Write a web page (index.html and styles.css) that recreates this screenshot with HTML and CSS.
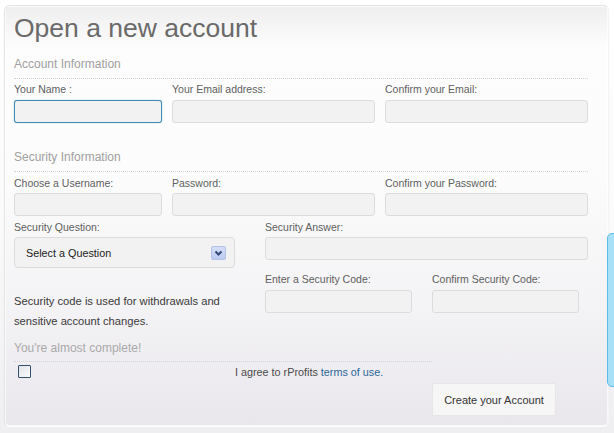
FILE: index.html
```html
<!DOCTYPE html>
<html>
<head>
<meta charset="utf-8">
<link rel="stylesheet" href="styles.css">
</head>
<body>
<div class="card">
  <h1 class="title">Open a new account</h1>

  <div class="section-head">Account Information</div>
  <div class="grid3 row1">
    <div class="field"><label>Your Name :</label><input class="input focus" type="text"></div>
    <div class="field"><label>Your Email address:</label><input class="input" type="text"></div>
    <div class="field"><label>Confirm your Email:</label><input class="input" type="text"></div>
  </div>

  <div class="section-head sec2">Security Information</div>
  <div class="grid3 row2">
    <div class="field"><label>Choose a Username:</label><input class="input" type="text"></div>
    <div class="field"><label>Password:</label><input class="input" type="password"></div>
    <div class="field"><label>Confirm your Password:</label><input class="input" type="password"></div>
  </div>

  <div class="sec3">
    <div class="col-left">
      <label>Security Question:</label>
      <div class="select">
        <span class="select-text">Select a Question</span>
        <span class="sel-btn"><svg width="15" height="14" viewBox="0 0 15 14"><path d="M4.5 5.5 L7.5 8.5 L10.5 5.5" fill="none" stroke="#34497a" stroke-width="2"/></svg></span>
      </div>
      <p class="note">Security code is used for withdrawals and<br>sensitive account changes.</p>
    </div>
    <div class="col-right">
      <label>Security Answer:</label>
      <input class="input answer" type="text">
      <div class="codes">
        <div class="field"><label>Enter a Security Code:</label><input class="input" type="text"></div>
        <div class="field"><label>Confirm Security Code:</label><input class="input" type="text"></div>
      </div>
    </div>
  </div>

  <div class="sec4">
    <div class="finish">
      <div class="almost">You're almost complete!</div>
      <div class="agree">
        <span class="checkbox"></span>
        <span class="agree-text">I agree to rProfits <a class="terms" href="#">terms of use.</a></span>
      </div>
    </div>
    <div class="submit">
      <button class="btn" type="button">Create your Account</button>
    </div>
  </div>
</div>
<div class="side-tab"></div>
</body>
</html>
```

FILE: styles.css
```css
html, body {
  margin: 0;
  padding: 0;
}
body {
  width: 614px;
  height: 433px;
  overflow: hidden;
  position: relative;
  background: linear-gradient(#ffffff 0, #fbfbfb 50%, #efeef1 100%);
  font-family: "Liberation Sans", Arial, sans-serif;
  color: #555;
}
.card {
  box-sizing: border-box;
  margin: 5px 5px 0 4px;
  height: 422px;
  border: 1px solid #e4e4e4;
  border-bottom-color: #fff;
  border-right-color: #f4f4f4;
  border-radius: 6px;
  box-shadow: inset 0 0 0 1px rgba(255,255,255,0.7), 0 0 1px rgba(0,0,0,0.08);
  background: linear-gradient(#eeeeee 0, #fdfdfd 42px, #fcfcfc 40%, #f4f3f5 70%, #e9e7ec 100%);
  padding: 7px 0 0 9px;
}
.title {
  margin: 0;
  font-weight: normal;
  font-size: 26.5px;
  line-height: 30px;
  color: #6a6a6a;
}
.section-head {
  margin-top: 14px;
  width: 574px;
  font-size: 12px;
  line-height: 14px;
  color: #a0a0a0;
  padding-bottom: 7px;
  border-bottom: 1px dotted #d4d4d4;
}
.sec2 {
  margin-top: 27px;
}
label {
  display: block;
  font-size: 10.5px;
  line-height: 13px;
  color: #606060;
}
.grid3 {
  display: grid;
  grid-template-columns: 148px 203px 203px;
  column-gap: 10px;
}
.row1 {
  margin-top: 4px;
}
.row1 .input {
  margin-top: 4px;
}
.row2 {
  margin-top: 4.5px;
}
.row2 .input {
  margin-top: 3.5px;
}
.input {
  display: block;
  box-sizing: border-box;
  width: 100%;
  height: 23px;
  margin: 0;
  padding: 0 4px;
  border: 1px solid #dcdcdc;
  border-radius: 3px;
  background: #f2f2f2;
  outline: none;
}
.input.focus {
  border-color: #3f8cb8;
  box-shadow: 0 0 1px #3f8cb8;
}
.sec3 {
  margin-top: 5px;
  display: grid;
  grid-template-columns: 221px 323px;
  column-gap: 30px;
}
.select {
  margin-top: 3px;
  box-sizing: border-box;
  height: 31px;
  border: 1px solid #dcdcdc;
  border-radius: 4px;
  background: #f2f2f2;
  display: flex;
  align-items: center;
  justify-content: space-between;
  padding: 0 8px 0 11px;
}
.select-text {
  font-size: 10.8px;
  color: #222;
}
.sel-btn {
  display: flex;
  width: 15px;
  height: 14px;
  box-sizing: border-box;
  border: 1px solid #b3c2e6;
  border-radius: 2px;
  background: linear-gradient(#d5def7, #bccbf0);
}
.sel-btn svg {
  display: block;
  margin: -1px;
}
.note {
  margin: 23.4px 0 0 0;
  font-size: 11.2px;
  line-height: 20px;
  color: #3a3a3a;
}
.answer {
  margin-top: 3px;
}
.codes {
  margin-top: 13px;
  display: grid;
  grid-template-columns: 147px 147px;
  column-gap: 20px;
}
.codes .input {
  margin-top: 4px;
}
.sec4 {
  margin-top: 10px;
  display: grid;
  grid-template-columns: 418px 130px;
}
.almost {
  font-size: 12px;
  line-height: 14px;
  color: #aaa;
  padding-bottom: 6px;
  border-bottom: 1px dotted #d4d4d4;
}
.agree {
  margin-top: 3px;
  display: flex;
  align-items: center;
  height: 13px;
}
.checkbox {
  box-sizing: border-box;
  width: 13px;
  height: 13px;
  margin-left: 4px;
  border: 1px solid #34506b;
  border-radius: 1px;
  background: linear-gradient(135deg, #dfe3e8, #fbfbfb);
}
.agree-text {
  margin-left: 204px;
  font-size: 10.8px;
  line-height: 13px;
  color: #4a4a4a;
  padding-top: 2px;
}
.terms {
  color: #2b6699;
  text-decoration: none;
}
.btn {
  margin-top: 42px;
  box-sizing: border-box;
  width: 124px;
  height: 33px;
  padding: 0;
  border: 1px solid #e6e6e6;
  border-radius: 2px;
  background: #f6f6f6;
  font-family: "Liberation Sans", Arial, sans-serif;
  font-size: 11px;
  color: #333;
}
.side-tab {
  position: absolute;
  left: 607px;
  top: 233px;
  width: 14px;
  height: 154px;
  box-sizing: border-box;
  border: 1px solid #5dbde6;
  border-radius: 5px;
  background: #a8e1f7;
}
```
